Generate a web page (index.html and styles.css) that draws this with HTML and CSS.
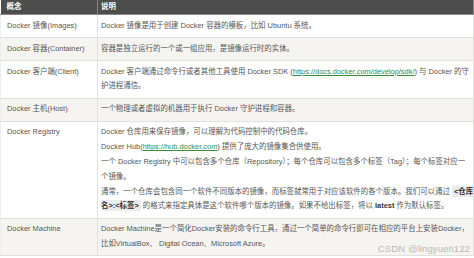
FILE: index.html
```html
<!DOCTYPE html>
<html lang="zh-CN">
<head>
<meta charset="utf-8">
<link rel="stylesheet" href="styles.css">
</head>
<body>
<div class="page">
<table class="t">
<colgroup><col class="w1"><col class="w2"></colgroup>
<thead>
<tr><th class="c1">概念</th><th class="c2">说明</th></tr>
</thead>
<tbody>
<tr><td class="c1">Docker 镜像(Images)</td><td class="c2">Docker 镜像是用于创建 Docker 容器的模板，比如 Ubuntu 系统。</td></tr>
<tr class="alt"><td class="c1">Docker 容器(Container)</td><td class="c2">容器是独立运行的一个或一组应用，是镜像运行时的实体。</td></tr>
<tr><td class="c1">Docker 客户端(Client)</td><td class="c2">Docker 客户端通过命令行或者其他工具使用 Docker SDK (<a href="#">https://docs.docker.com/develop/sdk/</a>) 与 Docker 的守<br>护进程通信。</td></tr>
<tr class="alt"><td class="c1">Docker 主机(Host)</td><td class="c2">一个物理或者虚拟的机器用于执行 Docker 守护进程和容器。</td></tr>
<tr><td class="c1">Docker Registry</td><td class="c2">Docker 仓库用来保存镜像，可以理解为代码控制中的代码仓库。<br>Docker Hub(<a href="#">https://hub.docker.com</a>) 提供了庞大的镜像集合供使用。<br>一个 Docker Registry 中可以包含多个仓库（Repository）；每个仓库可以包含多个标签（Tag）；每个标签对应一<br>个镜像。<br>通常，一个仓库会包含同一个软件不同版本的镜像，而标签就常用于对应该软件的各个版本。我们可以通过 <code class="hl">&lt;仓库<br>名&gt;:&lt;标签&gt;</code> 的格式来指定具体是这个软件哪个版本的镜像。如果不给出标签，将以 <b>latest</b> 作为默认标签。</td></tr>
<tr class="alt"><td class="c1">Docker Machine</td><td class="c2">Docker Machine是一个简化Docker安装的命令行工具，通过一个简单的命令行即可在相应的平台上安装Docker，<br>比如VirtualBox、 Digital Ocean、Microsoft Azure。</td></tr>
</tbody>
</table>
<div class="wm">CSDN @lingyuen122</div>
</div>
</body>
</html>
```
FILE: styles.css
```css
html, body {
  margin: 0;
  padding: 0;
  background: #ffffff;
}
.page {
  position: relative;
  width: 474px;
  height: 258px;
  overflow: hidden;
}
.t {
  border-collapse: collapse;
  table-layout: fixed;
  width: 473px;
  font-family: "Liberation Sans", "Noto Sans CJK SC", sans-serif;
  font-size: 7.43px;
  color: #555;
}
.w1 { width: 97px; }
.w2 { width: 376px; }
th {
  background: #4d4d4d;
  color: #fff;
  font-weight: bold;
  text-align: left;
  height: 14px;
  line-height: 14px;
  padding: 0;
  border-bottom: 1px solid #8a8a8a;
  border-right: 1px solid #888;
}
td {
  vertical-align: top;
  line-height: 14.8px;
  padding: 3.6px 0;
  border: 1px solid #e2e0dc;
  white-space: nowrap;
}
th.c1, td.c1 { padding-left: 6px; }
th.c2, td.c2 { padding-left: 3px; }
td.c1 { border-left: 1px solid #eee; }
tr.alt td { background: #f5f4f1; }
a {
  color: #3b8a3b;
  text-decoration: underline;
}
.hl {
  font-family: inherit;
  font-weight: bold;
  color: #333;
  background: #ececec;
  padding: 1px 2px;
}
b { color: #333; }
.wm {
  position: absolute;
  right: 4px;
  bottom: 4px;
  font-family: "Liberation Sans", sans-serif;
  font-size: 9.5px;
  color: #b8b8b8;
  letter-spacing: 0.1px;
}
```
